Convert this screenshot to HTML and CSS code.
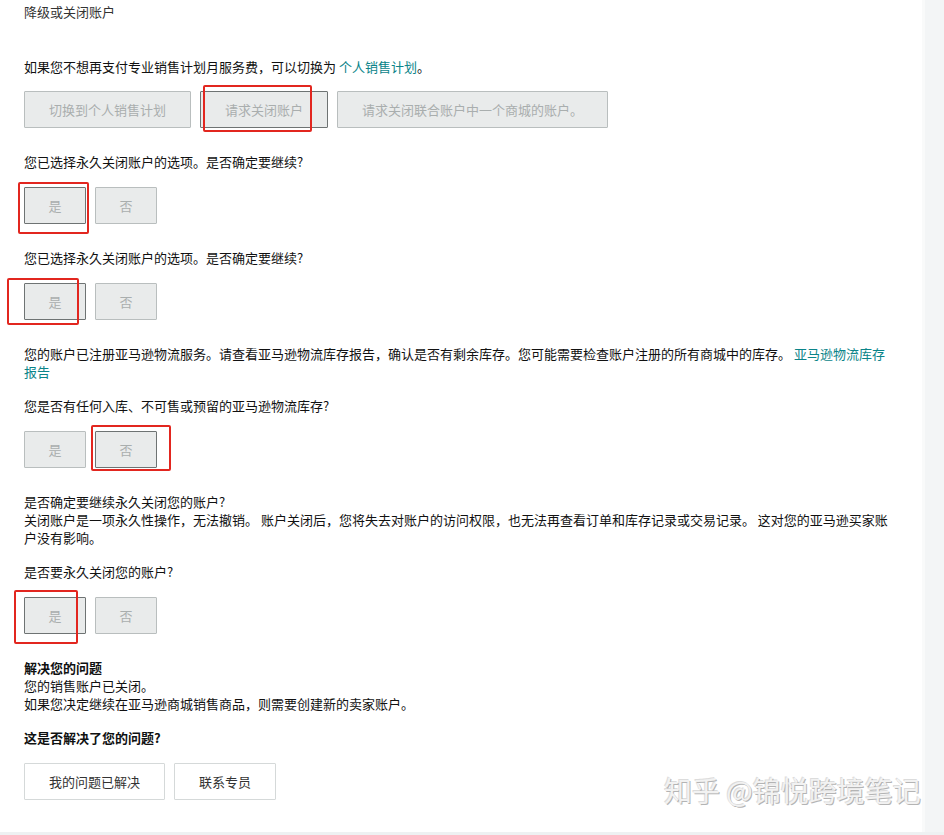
FILE: index.html
```html
<!DOCTYPE html>
<html lang="zh-CN">
<head>
    <meta charset="UTF-8">
    <title>降级或关闭账户</title>
    <link rel="stylesheet" href="styles.css">
</head>
<body>
    <div class="page">
        <div class="panel">
            <h1 class="title">降级或关闭账户</h1>

            <p class="text intro">如果您不想再支付专业销售计划月服务费，可以切换为 <a href="#">个人销售计划</a>。</p>
            <div class="choices first">
                <button class="btn">切换到个人销售计划</button>
                <button class="btn picked">请求关闭账户</button>
                <button class="btn">请求关闭联合账户中一个商城的账户。</button>
                <span class="mark mark-1"></span>
            </div>

            <p class="text">您已选择永久关闭账户的选项。是否确定要继续?</p>
            <div class="choices">
                <button class="btn small picked">是</button>
                <button class="btn small">否</button>
                <span class="mark mark-2"></span>
            </div>

            <p class="text">您已选择永久关闭账户的选项。是否确定要继续?</p>
            <div class="choices">
                <button class="btn small picked">是</button>
                <button class="btn small">否</button>
                <span class="mark mark-3"></span>
            </div>

            <p class="text">您的账户已注册亚马逊物流服务。请查看亚马逊物流库存报告，确认是否有剩余库存。您可能需要检查账户注册的所有商城中的库存。 <a href="#">亚马逊物流库存报告</a></p>
            <p class="text">您是否有任何入库、不可售或预留的亚马逊物流库存?</p>
            <div class="choices">
                <button class="btn small">是</button>
                <button class="btn small picked">否</button>
                <span class="mark mark-4"></span>
            </div>

            <p class="text">是否确定要继续永久关闭您的账户?<br>关闭账户是一项永久性操作，无法撤销。 账户关闭后，您将失去对账户的访问权限，也无法再查看订单和库存记录或交易记录。 这对您的亚马逊买家账户没有影响。</p>
            <p class="text">是否要永久关闭您的账户?</p>
            <div class="choices">
                <button class="btn small picked">是</button>
                <button class="btn small">否</button>
                <span class="mark mark-5"></span>
            </div>

            <p class="text"><b>解决您的问题</b><br>您的销售账户已关闭。<br>如果您决定继续在亚马逊商城销售商品，则需要创建新的卖家账户。</p>
            <p class="text"><b>这是否解决了您的问题?</b></p>
            <div class="choices">
                <button class="btn plain">我的问题已解决</button>
                <button class="btn plain">联系专员</button>
            </div>

            <div class="watermark">知乎 @锦悦跨境笔记</div>
        </div>
    </div>
</body>
</html>
```

FILE: styles.css
```css
body {
    margin: 0;
    background: #eef1f2;
    font-family: "Noto Sans CJK SC", "Noto Sans", sans-serif;
    font-size: 13px;
    line-height: 18px;
    color: #111;
}
.page {
    display: flex;
    background: #f3f5f6;
}
.panel {
    position: relative;
    width: 925px;
    height: 832px;
    box-sizing: border-box;
    padding: 3px 32px 0 24px;
    background: #fff;
    border-right: 3px solid #f9fafa;
}
.title {
    margin: 0;
    font-size: 13px;
    font-weight: normal;
    color: #333;
}
.text {
    margin: 16px 0 0;
}
.text.intro {
    margin-top: 37px;
}
.text b {
    font-weight: bold;
    color: #0f1111;
}
a {
    color: #0b8489;
    text-decoration: none;
}
.choices {
    position: relative;
    display: flex;
    gap: 9px;
    margin-top: 16px;
}
.choices.first {
    margin-top: 15px;
}
.choices + .text {
    margin-top: 25px;
}
.btn {
    height: 37px;
    box-sizing: border-box;
    padding: 0 24px;
    font-family: inherit;
    font-size: 13px;
    line-height: 18px;
    color: #a9aeae;
    background: #e9ebeb;
    border: 1px solid #b9bebe;
    border-radius: 1px;
}
.btn.picked {
    border-color: #6e7373;
}
.btn.small {
    width: 62px;
    padding: 0;
}
.btn.plain {
    background: #fff;
    color: #333;
    border-color: #d5d9d9;
}
.mark {
    position: absolute;
    border: 2px solid #e2261f;
    border-radius: 2px;
    box-sizing: border-box;
}
.mark-1 { left: 179px; top: -6px; width: 109px; height: 47px; }
.mark-2 { left: -6px; top: -5px; width: 71px; height: 52px; }
.mark-3 { left: -17px; top: -5px; width: 72px; height: 47px; }
.mark-4 { left: 67px; top: -6px; width: 80px; height: 46px; }
.mark-5 { left: -10px; top: -7px; width: 64px; height: 54px; }
.watermark {
    position: absolute;
    left: 664px;
    top: 771px;
    font-size: 28px;
    line-height: 38px;
    color: #f2f2f2;
    text-shadow: 1px 1px 0 #b4b4b4, -1px -1px 0 #dcdcdc;
    white-space: nowrap;
}
```
